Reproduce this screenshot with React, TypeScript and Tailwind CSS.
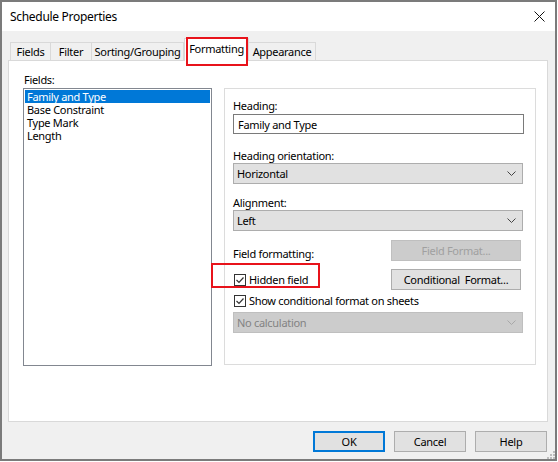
import React from 'react';

const font = { fontFamily: '"Noto Sans", "Liberation Sans", sans-serif' };

const tabs = [
  { label: 'Fields', w: 'w-[41px]' },
  { label: 'Filter', w: 'w-[42px]' },
  { label: 'Sorting/Grouping', w: 'w-[93px]' },
];

const fields = ['Family and Type', 'Base Constraint', 'Type Mark', 'Length'];

const Chevron = ({ color = '#444' }: { color?: string }) => (
  <svg width="9" height="5" viewBox="0 0 9 5" className="shrink-0">
    <polyline points="0.5,0.5 4.5,4.5 8.5,0.5" fill="none" stroke={color} strokeWidth="1" />
  </svg>
);

const Checkbox = () => (
  <div className="w-[12px] h-[12px] border border-[#333333] bg-white flex items-center justify-center shrink-0">
    <svg width="10" height="10" viewBox="0 0 10 10">
      <polyline points="1.5,5 4,7.5 8.5,2.5" fill="none" stroke="#333333" strokeWidth="1.2" />
    </svg>
  </div>
);

const Select = ({ value, disabled }: { value: string; disabled?: boolean }) => (
  <div
    className={
      disabled
        ? 'h-[21px] w-[290px] flex items-center justify-between pl-[3px] pr-[6px] bg-[#cccccc] border border-[#bfbfbf] text-[#838383]'
        : 'h-[21px] w-[290px] flex items-center justify-between pl-[3px] pr-[6px] bg-[#e1e1e1] border border-[#adadad] text-black'
    }
  >
    <span>{value}</span>
    <Chevron color={disabled ? '#a8a8a8' : '#444'} />
  </div>
);

export default function App() {
  return (
    <div className="w-[558px] h-[462px] bg-white text-[11px] leading-[15px] tracking-[-0.3px] text-black" style={font}>
      <div className="w-[557px] h-[461px] border-2 border-[#7b7b7b] flex flex-col bg-[#f0f0f0]">
        {/* Title bar */}
        <div className="h-[29px] bg-white flex items-center justify-between pl-[8px] pr-[10px] shrink-0">
          <span className="text-[12px]">Schedule Properties</span>
          <svg width="11" height="11" viewBox="0 0 11 11">
            <path d="M0.5 0.5 L10.5 10.5 M10.5 0.5 L0.5 10.5" stroke="#111" strokeWidth="1" />
          </svg>
        </div>

        {/* Tabs */}
        <div className="mt-[7px] h-[22px] pl-[8px] flex items-end">
          {tabs.map((t) => (
            <div
              key={t.label}
              className={`${t.w} h-[18px] border border-b-0 border-[#d9d9d9] -mr-px flex items-center justify-center bg-[#f0f0f0]`}
            >
              {t.label}
            </div>
          ))}
          <div className="relative z-10 w-[65px] h-[23px] -mb-px ml-px -mr-px bg-white border border-b-0 border-[#d9d9d9] flex items-center justify-center pb-[3px]">
            Formatting
            <div className="absolute left-[1px] top-[-2px] w-[62px] h-[29px] border-2 border-[#e8131b]" />
          </div>
          <div className="w-[68px] h-[18px] border border-b-0 border-[#d9d9d9] flex items-center justify-center bg-[#f0f0f0]">
            Appearance
          </div>
        </div>

        {/* Tab panel */}
        <div className="ml-[6px] w-[540px] h-[362px] bg-white border border-[#d9d9d9] pt-[11px] pl-[14px] flex gap-[12px]">
          <div className="flex flex-col">
            <div className="h-[15px] ml-[1px]">Fields:</div>
            <div className="mt-[1px] w-[189px] h-[278px] border border-[#828790] p-px">
              {fields.map((f, i) => (
                <div
                  key={f}
                  className={i === 0 ? 'h-[13px] leading-[13px] pl-[2px] bg-[#0078d7] text-white' : 'h-[13px] leading-[13px] pl-[2px]'}
                >
                  {f}
                </div>
              ))}
            </div>
          </div>

          <div className="mt-[16px] w-[312px] h-[277px] border border-[#dcdcdc] pt-[9px] pl-[8px] flex flex-col">
            <div className="h-[15px]">Heading:</div>
            <div className="mt-[1px] w-[291px] h-[20px] border border-[#7a7a7a] pl-[4px] flex items-center">Family and Type</div>

            <div className="mt-[14px] h-[15px]">Heading orientation:</div>
            <Select value="Horizontal" />

            <div className="mt-[11px] h-[15px]">Alignment:</div>
            <Select value="Left" />

            <div className="mt-[9px] w-[288px] flex items-center justify-between">
              <span className="mt-[6px]">Field formatting:</span>
              <div className="w-[130px] h-[21px] bg-[#cccccc] border border-[#bfbfbf] text-[#a0a0a0] flex items-center justify-center">
                Field Format...
              </div>
            </div>

            <div className="mt-[8px] w-[288px] flex items-center justify-between">
              <div className="relative flex items-center gap-[3px] ml-px">
                <Checkbox />
                <span>Hidden field</span>
                <div className="absolute left-[-23px] top-[-9px] w-[109px] h-[25px] border-2 border-[#e8131b]" />
              </div>
              <div className="w-[130px] h-[21px] bg-[#e1e1e1] border border-[#adadad] flex items-center justify-center">
                Conditional&nbsp;&nbsp;Format...
              </div>
            </div>

            <div className="mt-[3px] h-[15px] flex items-center gap-[3px] ml-px">
              <Checkbox />
              <span>Show conditional format on sheets</span>
            </div>

            <div className="mt-[4px]">
              <Select value="No calculation" disabled />
            </div>
          </div>
        </div>

        {/* Buttons */}
        <div className="relative flex-1 flex justify-end items-start gap-[9px] pt-[9px] pr-[8px]">
          <div className="w-[72px] h-[21px] border-2 border-[#0078d7] bg-[#e1e1e1] flex items-center justify-center">OK</div>
          <div className="w-[72px] h-[21px] border border-[#adadad] bg-[#e1e1e1] flex items-center justify-center">Cancel</div>
          <div className="w-[72px] h-[21px] border border-[#adadad] bg-[#e1e1e1] flex items-center justify-center">Help</div>
          <svg width="8" height="8" viewBox="0 0 8 8" className="absolute right-0 bottom-0">
            <rect x="6" y="0" width="2" height="2" fill="#bdbdbd" />
            <rect x="3" y="3" width="2" height="2" fill="#bdbdbd" />
            <rect x="6" y="3" width="2" height="2" fill="#bdbdbd" />
            <rect x="0" y="6" width="2" height="2" fill="#bdbdbd" />
            <rect x="3" y="6" width="2" height="2" fill="#bdbdbd" />
            <rect x="6" y="6" width="2" height="2" fill="#bdbdbd" />
          </svg>
        </div>
      </div>
    </div>
  );
}
